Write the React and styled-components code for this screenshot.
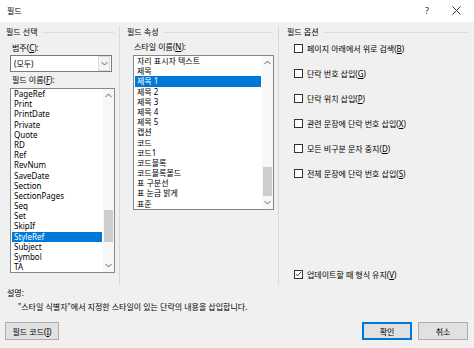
import React from 'react'
import styled, { createGlobalStyle } from 'styled-components'

const GlobalStyle = createGlobalStyle`
  html, body { margin: 0; padding: 0; background: #f0f0f0; }
`;

const fieldNames = [
  'PageRef', 'Print', 'PrintDate', 'Private', 'Quote', 'RD', 'Ref', 'RevNum',
  'SaveDate', 'Section', 'SectionPages', 'Seq', 'Set', 'SkipIf', 'StyleRef',
  'Subject', 'Symbol', 'TA',
];

const styleNames = [
  '자리 표시자 텍스트', '제목', '제목 1', '제목 2', '제목 3', '제목 4', '제목 5',
  '캡션', '코드', '코드1', '코드블록', '코드블록볼드', '표 구분선', '표 눈금 밝게', '표준',
];

const options = [
  ['페이지 아래에서 위로 검색', 'B'],
  ['단락 번호 삽입', 'G'],
  ['단락 위치 삽입', 'P'],
  ['관련 문장에 단락 번호 삽입', 'X'],
  ['모든 비구분 문자 중지', 'D'],
  ['전체 문장에 단락 번호 삽입', 'S'],
];

const Chevron = ({ up }) => (
  <svg width="7" height="5" viewBox="0 0 7 5">
    <polyline
      points={up ? '0.5,4 3.5,1 6.5,4' : '0.5,1 3.5,4 6.5,1'}
      fill="none" stroke="#606060" strokeWidth="1"
    />
  </svg>
);

const ListBox = ({ items, selected, thumbTop, thumbSize, width, height, ml }) => (
  <List $w={width} $h={height} $ml={ml}>
    <Items>
      {items.map((it, i) => (
        <Item key={it} $active={i === selected}>{it}</Item>
      ))}
    </Items>
    <ScrollBar>
      <Chevron up />
      <Track>
        <Thumb style={{ marginTop: thumbTop, height: thumbSize }} />
      </Track>
      <Chevron />
    </ScrollBar>
  </List>
);

const App = () => {
  return <Window>
    <GlobalStyle />
    <TitleBar>
      <span>필드</span>
      <TitleButtons>
        <span>?</span>
        <svg width="9" height="9" viewBox="0 0 9 9">
          <path d="M0.5 0.5 L8.5 8.5 M8.5 0.5 L0.5 8.5" stroke="#222" strokeWidth="0.9" />
        </svg>
      </TitleButtons>
    </TitleBar>

    <Columns>
      <Column $w={120} $pl={6} $border>
        <Heading>필드 선택</Heading>
        <Label $ml={6} $mt={4}>범주(<u>C</u>):</Label>
        <Select>
          <span>(모두)</span>
          <DropButton><Chevron /></DropButton>
        </Select>
        <Label $ml={6} $mt={2}>필드 이름(<u>F</u>):</Label>
        <ListBox items={fieldNames} selected={14} thumbTop={112} thumbSize={32}
          width={105} height={185} ml={4} />
      </Column>

      <Column $w={159} $pl={7} $border>
        <Heading>필드 속성</Heading>
        <Label $ml={7} $mt={3}>스타일 이름(<u>N</u>):</Label>
        <ListBox items={styleNames} selected={2} thumbTop={102} thumbSize={29}
          width={141} height={155} ml={6} />
      </Column>

      <Column $pl={8}>
        <Heading>필드 옵션</Heading>
        <Options>
          {options.map(([text, key]) => (
            <CheckRow key={key}>
              <Box />
              <span>{text}(<u>{key}</u>)</span>
            </CheckRow>
          ))}
        </Options>
        <CheckRow $bottom>
          <Box>
            <svg width="8" height="8" viewBox="0 0 8 8">
              <polyline points="1,4 3,6.2 7,1.5" fill="none" stroke="#222" strokeWidth="1" />
            </svg>
          </Box>
          <span>업데이트할 때 형식 유지(<u>V</u>)</span>
        </CheckRow>
      </Column>
    </Columns>

    <Description>
      <div>설명:</div>
      <DescText>"스타일 식별자"에서 지정한 스타일이 있는 단락의 내용을 삽입합니다.</DescText>
    </Description>

    <Footer>
      <Button $w={54}>필드 코드(<u>I</u>)</Button>
      <Spacer />
      <Button $w={50} $default>확인</Button>
      <Button $w={50}>취소</Button>
    </Footer>
  </Window>
};

const Window = styled.div`
  width: 474px;
  height: 348px;
  background: #f0f0f0;
  display: flex;
  flex-direction: column;
  font-family: "Noto Sans", "Noto Sans CJK KR", sans-serif;
  font-size: 8px;
  color: #000;
  overflow: hidden;
  u { text-decoration: underline; text-underline-offset: 1px; }
`;

const TitleBar = styled.div`
  height: 22px;
  flex-shrink: 0;
  background: #fff;
  display: flex;
  align-items: center;
  padding: 0 13px 2px 7px;
  box-sizing: border-box;
  font-size: 8px;
`;

const TitleButtons = styled.div`
  margin-left: auto;
  display: flex;
  align-items: center;
  gap: 23px;
  font-size: 9px;
  color: #222;
`;

const Columns = styled.div`
  display: flex;
  margin-top: 4px;
  height: 259px;
  flex-shrink: 0;
`;

const Column = styled.div`
  ${p => p.$w ? `width: ${p.$w}px;` : 'flex: 1;'}
  flex-shrink: 0;
  box-sizing: border-box;
  padding-left: ${p => p.$pl}px;
  border-right: ${p => p.$border ? '1px solid #d9d9d9' : 'none'};
  display: flex;
  flex-direction: column;
  align-items: flex-start;
`;

const Heading = styled.div`
  align-self: stretch;
  display: flex;
  align-items: center;
  gap: 4px;
  height: 12px;
  line-height: 12px;
  padding-right: 5px;
  &::after {
    content: '';
    flex: 1;
    height: 1px;
    background: #dcdcdc;
    margin-top: 1px;
  }
`;

const Label = styled.div`
  line-height: 12px;
  margin-left: ${p => p.$ml}px;
  margin-top: ${p => p.$mt}px;
`;

const Select = styled.div`
  margin: 1px 0 0 4px;
  width: 102px;
  height: 17px;
  box-sizing: border-box;
  border: 1px solid #7a7a7a;
  background: #fff;
  display: flex;
  align-items: center;
  padding-left: 3px;
`;

const DropButton = styled.div`
  margin-left: auto;
  width: 10px;
  height: 13px;
  margin-right: 1px;
  border: 1px solid #dcdcdc;
  background: #f4f4f4;
  display: flex;
  align-items: center;
  justify-content: center;
`;

const List = styled.div`
  margin: 2px 0 0 ${p => p.$ml}px;
  width: ${p => p.$w}px;
  height: ${p => p.$h}px;
  box-sizing: border-box;
  border: 1px solid #828790;
  background: #fff;
  display: flex;
`;

const Items = styled.div`
  flex: 1;
  padding: 0 1px;
  overflow: hidden;
`;

const Item = styled.div`
  height: 10.2px;
  line-height: 10.2px;
  padding-left: 2px;
  white-space: nowrap;
  background: ${p => p.$active ? '#0078d7' : 'transparent'};
  color: ${p => p.$active ? '#fff' : '#000'};
`;

const ScrollBar = styled.div`
  width: 11px;
  background: #f7f7f7;
  display: flex;
  flex-direction: column;
  align-items: center;
  padding: 4px 0;
  box-sizing: border-box;
`;

const Track = styled.div`
  flex: 1;
  align-self: stretch;
  padding: 0 1px;
`;

const Thumb = styled.div`
  background: #cdcdcd;
`;

const Options = styled.div`
  display: flex;
  flex-direction: column;
  gap: 13.2px;
  margin-top: 4px;
`;

const CheckRow = styled.div`
  display: flex;
  align-items: center;
  gap: 4px;
  height: 12px;
  padding-left: 7px;
  margin-top: ${p => p.$bottom ? 'auto' : '0'};
  margin-bottom: ${p => p.$bottom ? '5px' : '0'};
`;

const Box = styled.div`
  width: 9px;
  height: 9px;
  box-sizing: border-box;
  border: 1px solid #333;
  background: #fff;
  display: flex;
  align-items: center;
  justify-content: center;
`;

const Description = styled.div`
  padding: 2px 0 0 7px;
  line-height: 12px;
`;

const DescText = styled.div`
  margin-top: 2px;
  padding-left: 11px;
`;

const Footer = styled.div`
  display: flex;
  align-items: center;
  gap: 6px;
  padding: 0 6px 0 5px;
  margin-top: 9px;
`;

const Spacer = styled.div`
  flex: 1;
`;

const Button = styled.div`
  width: ${p => p.$w}px;
  height: 18px;
  box-sizing: border-box;
  background: #e1e1e1;
  border: 1px solid ${p => p.$default ? '#0078d7' : '#adadad'};
  box-shadow: ${p => p.$default ? 'inset 0 0 0 1px #0078d7' : 'none'};
  display: flex;
  align-items: center;
  justify-content: center;
`;

export default App;
